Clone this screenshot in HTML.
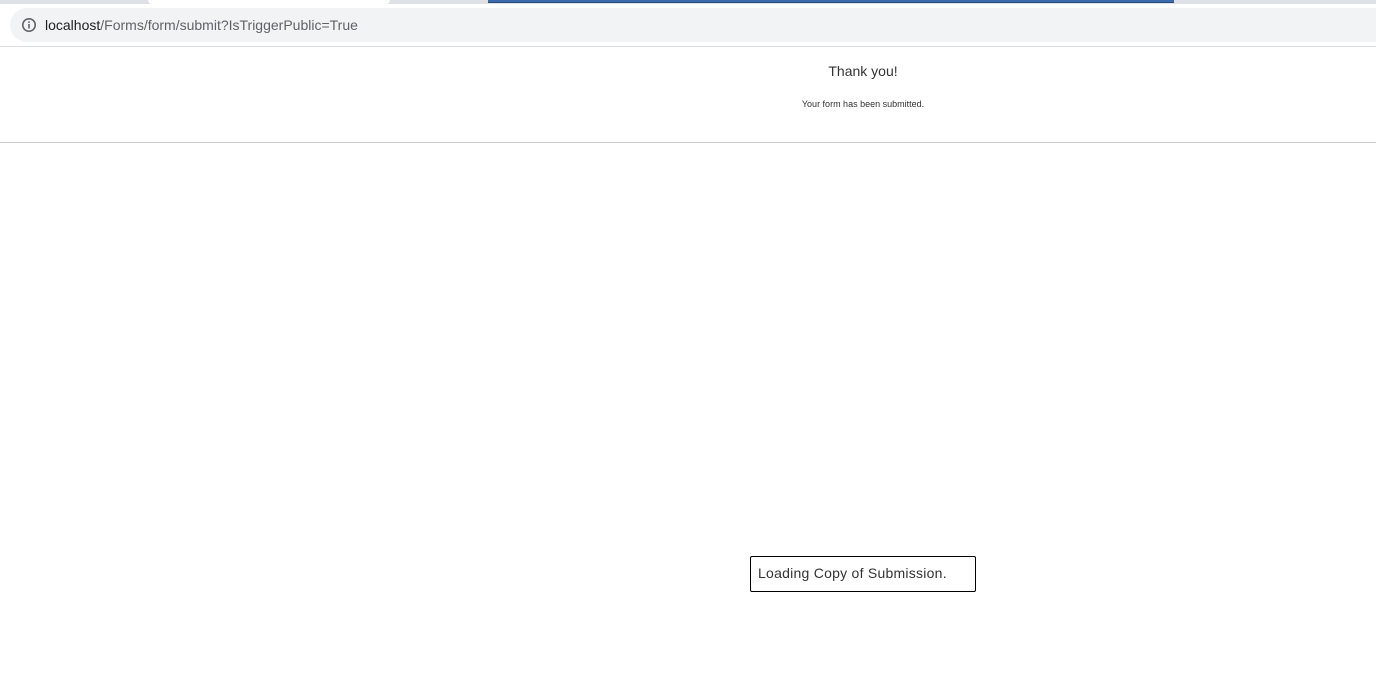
<!DOCTYPE html>
<html><head><meta charset="utf-8"><style>
*{margin:0;padding:0;box-sizing:border-box}
body{width:1376px;height:696px;background:#fff;position:relative;overflow:hidden;font-family:"Liberation Sans",Arial,sans-serif}
.a{position:absolute}
</style></head><body>
<div class="a" style="left:0;top:0;width:1376px;height:4px;background:#dee1e6"></div>
<div class="a" style="left:148px;top:0;width:242px;height:4px;background:#fff;border-radius:0 0 4px 4px"></div>
<div class="a" style="left:488px;top:0;width:686px;height:3px;background:#3c6aad;border-bottom:1px solid #2a4a7a"></div>
<div class="a" style="left:10px;top:8px;width:1380px;height:34px;background:#f1f3f4;border-radius:17px"></div>
<svg class="a" style="left:21px;top:17px" width="16" height="16" viewBox="0 0 16 16"><circle cx="8" cy="8" r="6.2" fill="none" stroke="#5f6368" stroke-width="1.6"/><rect x="7.2" y="7" width="1.6" height="4.5" fill="#5f6368"/><rect x="7.2" y="4.3" width="1.6" height="1.6" fill="#5f6368"/></svg>
<div class="a" style="left:45px;top:17px;font-size:14px;line-height:16px;color:#5f6368"><span style="color:#202124">localhost</span>/Forms/form/submit?IsTriggerPublic=True</div>
<div class="a" style="left:0;top:46px;width:1376px;height:1px;background:#dadce0"></div>
<div class="a" style="left:0;top:63px;width:1726px;text-align:center;font-size:14px;color:#333">Thank you!</div>
<div class="a" style="left:0;top:99px;width:1726px;text-align:center;font-size:9px;color:#333">Your form has been submitted.</div>
<div class="a" style="left:0;top:142px;width:1376px;height:1px;background:#ccc"></div>
<div class="a" style="left:750px;top:556px;width:226px;height:36px;border:1px solid #000;border-radius:2px;font-size:14px;letter-spacing:0.25px;color:#333;padding:8px 0 0 7px">Loading Copy of Submission.</div>
</body></html>
